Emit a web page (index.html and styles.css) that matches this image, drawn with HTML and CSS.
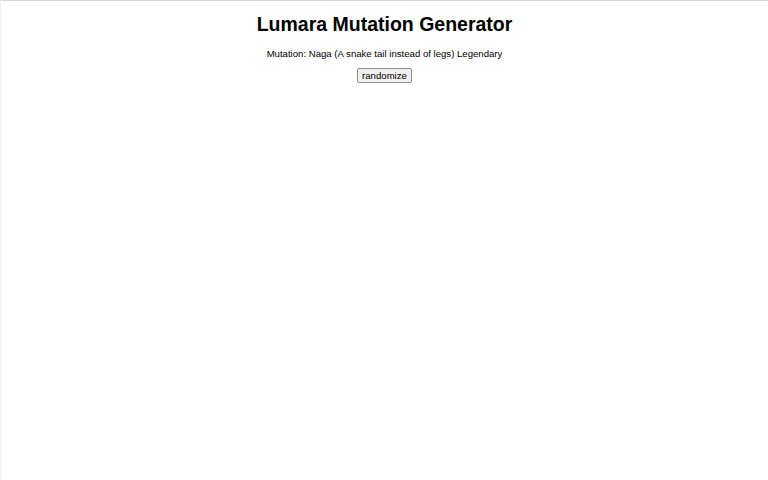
FILE: index.html
```html
<!DOCTYPE html>
<html lang="en">
<head>
    <meta charset="UTF-8">
    <meta name="viewport" content="width=device-width, initial-scale=1.0">
    <title>Lumara Mutation Generator</title>
    <link rel="stylesheet" href="styles.css">
</head>
<body>
    <h1>Lumara Mutation Generator</h1>
    <p id="mutation">Mutation: Naga (A snake tail instead of legs) Legendary</p>
    <button class="random-btn">randomize</button>
</body>
</html>
```

FILE: styles.css
```css
html {
    height: 100%;
}

body {
    font-family: "Liberation Sans", Arial, sans-serif;
    margin: 0;
    min-height: 100%;
    box-sizing: border-box;
    border-top: 1px solid #d6d6d6;
    border-left: 1px solid #f0f0f0;
    text-align: center;
    background-color: #fff;
    color: #000;
}

h1 {
    font-size: 19.5px;
    line-height: 23px;
    margin: 12px 0 0;
}

p {
    font-size: 9.6px;
    line-height: 12px;
    margin: 12px 0 0;
}

.random-btn {
    font-family: "Liberation Sans", Arial, sans-serif;
    font-size: 9.6px;
    line-height: 11px;
    margin-top: 8px;
    padding: 1px 4px;
    background-color: #f0f0f0;
    border: 1px solid #8f8f8f;
    border-radius: 2px;
    color: #000;
}
```
